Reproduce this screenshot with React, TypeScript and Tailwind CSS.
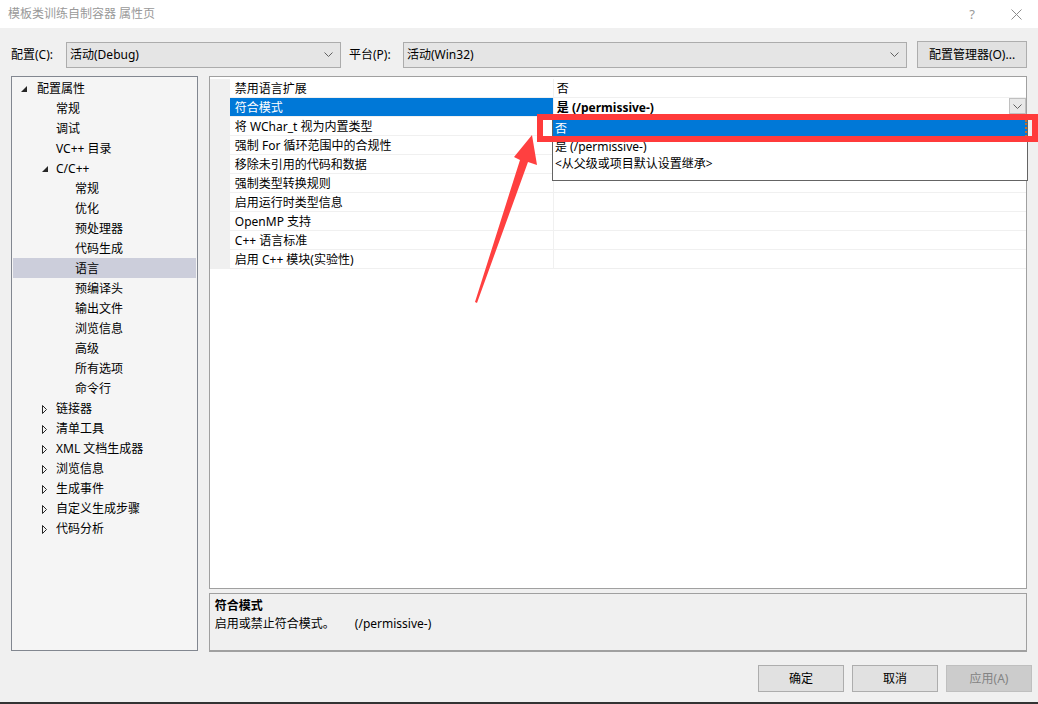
import React from 'react';

type TreeItem = { label: string; level: number; toggle?: 'open' | 'closed'; selected?: boolean };

const tree: TreeItem[] = [
  { label: '配置属性', level: 0, toggle: 'open' },
  { label: '常规', level: 1 },
  { label: '调试', level: 1 },
  { label: 'VC++ 目录', level: 1 },
  { label: 'C/C++', level: 1, toggle: 'open' },
  { label: '常规', level: 2 },
  { label: '优化', level: 2 },
  { label: '预处理器', level: 2 },
  { label: '代码生成', level: 2 },
  { label: '语言', level: 2, selected: true },
  { label: '预编译头', level: 2 },
  { label: '输出文件', level: 2 },
  { label: '浏览信息', level: 2 },
  { label: '高级', level: 2 },
  { label: '所有选项', level: 2 },
  { label: '命令行', level: 2 },
  { label: '链接器', level: 1, toggle: 'closed' },
  { label: '清单工具', level: 1, toggle: 'closed' },
  { label: 'XML 文档生成器', level: 1, toggle: 'closed' },
  { label: '浏览信息', level: 1, toggle: 'closed' },
  { label: '生成事件', level: 1, toggle: 'closed' },
  { label: '自定义生成步骤', level: 1, toggle: 'closed' },
  { label: '代码分析', level: 1, toggle: 'closed' },
];

const props: { name: string; value: string }[] = [
  { name: '禁用语言扩展', value: '否' },
  { name: '符合模式', value: '是 (/permissive-)' },
  { name: '将 WChar_t 视为内置类型', value: '' },
  { name: '强制 For 循环范围中的合规性', value: '' },
  { name: '移除未引用的代码和数据', value: '' },
  { name: '强制类型转换规则', value: '' },
  { name: '启用运行时类型信息', value: '' },
  { name: 'OpenMP 支持', value: '' },
  { name: 'C++ 语言标准', value: '' },
  { name: '启用 C++ 模块(实验性)', value: '' },
];

const Chevron = () => (
  <svg width="9" height="5" viewBox="0 0 9 5" className="shrink-0">
    <polyline points="0.5,0.5 4.5,4.5 8.5,0.5" fill="none" stroke="#606060" strokeWidth="1" />
  </svg>
);

function Combo({ value, width }: { value: string; width: string }) {
  return (
    <div className={`${width} h-[26px] flex items-center justify-between border border-[#acacac] bg-[#e5e5e5] pl-[3px] pr-[7px]`}>
      <span>{value}</span>
      <Chevron />
    </div>
  );
}

function Toggle({ kind }: { kind: 'open' | 'closed' }) {
  if (kind === 'open') {
    return (
      <svg width="6" height="6" viewBox="0 0 6 6">
        <polygon points="6,0 6,6 0,6" fill="#262626" />
      </svg>
    );
  }
  return (
    <svg width="5" height="9" viewBox="0 0 5 9">
      <polygon points="0.5,0.5 4.5,4.5 0.5,8.5" fill="none" stroke="#262626" strokeWidth="1" />
    </svg>
  );
}

function Button({ label, disabled }: { label: string; disabled?: boolean }) {
  return (
    <div
      className={`w-[86px] h-[27px] flex items-center justify-center border ${
        disabled ? 'border-[#bfbfbf] bg-[#cccccc] text-[#838383]' : 'border-[#adadad] bg-[#e1e1e1] text-black'
      }`}
    >
      {label}
    </div>
  );
}

export default function App() {
  return (
    <div
      className="relative w-[1038px] h-[704px] flex flex-col bg-[#f0f0f0] text-[12px] leading-none text-black overflow-hidden"
      style={{ fontFamily: '"Noto Sans", "Noto Sans CJK SC", sans-serif' }}
    >
      {/* title bar */}
      <div className="h-[28px] shrink-0 bg-white flex items-center justify-between pl-[8px] pr-[16px] text-[#999999]">
        <span>模板类训练自制容器 属性页</span>
        <div className="flex items-center gap-[36px]">
          <span className="text-[13px]">?</span>
          <svg width="11" height="11" viewBox="0 0 11 11">
            <path d="M0.5 0.5 L10.5 10.5 M10.5 0.5 L0.5 10.5" stroke="#8c8c8c" strokeWidth="1" />
          </svg>
        </div>
      </div>

      {/* configuration / platform row */}
      <div className="mt-[13px] h-[27px] shrink-0 flex items-center px-[11px]">
        <span className="w-[55px]">配置(C):</span>
        <Combo value="活动(Debug)" width="w-[275px]" />
        <span className="ml-[8px] w-[54px]">平台(P):</span>
        <Combo value="活动(Win32)" width="w-[504px]" />
        <div className="ml-[10px] w-[110px] h-[27px] flex items-center justify-center border border-[#adadad] bg-[#e1e1e1]">
          配置管理器(O)...
        </div>
      </div>

      {/* tree + property grid */}
      <div className="mt-[8px] h-[576px] shrink-0 flex px-[11px] gap-[11px]">
        <div className="w-[187px] h-[575px] border border-[#828790] bg-[#f5f5f5] p-[1px] pt-[1px]">
          {tree.map((t, i) => (
            <div
              key={i}
              className={`h-[20px] flex items-center pt-[2px] ${t.selected ? 'bg-[#cccedb]' : ''}`}
            >
              <div
                className={`flex items-center shrink-0 ${
                  t.level === 0 ? 'w-[24px] pl-[8px]' : t.level === 1 ? 'w-[43px] pl-[29px]' : 'w-[62px]'
                }`}
              >
                {t.toggle && <Toggle kind={t.toggle} />}
              </div>
              <span>{t.label}</span>
            </div>
          ))}
        </div>

        <div className="w-[819px] flex flex-col gap-[4px]">
          <div className="h-[513px] border border-[#a0a0a0] bg-white pt-[2px]">
            {props.map((p, i) => {
              const sel = i === 1;
              return (
                <div key={i} className="h-[19px] flex">
                  <div className="w-[20px] bg-[#f0f0f0]" />
                  <div
                    className={`w-[323px] flex items-center pl-[5px] pt-[1px] border-b border-[#f0f0f0] ${
                      sel ? 'bg-[#0078d7] text-white border-[#0078d7]' : ''
                    }`}
                  >
                    {p.name}
                  </div>
                  <div className="flex-1 flex items-center justify-between pl-[3px] pt-[1px] border-l border-b border-[#f0f0f0]">
                    <span className={sel ? 'font-bold' : ''}>{p.value}</span>
                    {sel && (
                      <div className="w-[17px] h-[16px] self-start -mt-[1px] flex items-center justify-center border border-[#c0c0c0] bg-[#e8e8e8]">
                        <Chevron />
                      </div>
                    )}
                  </div>
                </div>
              );
            })}
          </div>

          {/* description */}
          <div className="h-[59px] border border-[#a0a0a0] border-b-2 bg-[#f0f0f0] px-[5px] pt-[6px] flex flex-col gap-[6px]">
            <span className="font-bold">符合模式</span>
            <span>
              启用或禁止符合模式。<span className="ml-[20px]">(/permissive-)</span>
            </span>
          </div>
        </div>
      </div>

      {/* dialog buttons */}
      <div className="mt-[13px] h-[27px] shrink-0 flex justify-end gap-[8px] pr-[6px]">
        <Button label="确定" />
        <Button label="取消" />
        <Button label="应用(A)" disabled />
      </div>
      <div className="mt-auto h-[2px] shrink-0 bg-[#333333]" />

      {/* open value list */}
      <div className="absolute left-[552px] top-[117px] w-[476px] h-[64px] border border-[#646464] bg-white pt-[2px]">
        <div className="h-[17px] flex items-center pl-[2px] bg-[#0078d7] text-white border-r-2 border-dotted border-[#c07030]">否</div>
        <div className="h-[18px] flex items-center pl-[2px] pt-[1px]">是 (/permissive-)</div>
        <div className="h-[17px] flex items-center pl-[2px]">&lt;从父级或项目默认设置继承&gt;</div>
      </div>

      {/* red highlight */}
      <div className="absolute left-[537px] top-[114px] w-[501px] h-[28px] border-[6px] border-[#ff3b3b]" />
      <div className="absolute left-[543px] top-[120px] w-[9px] h-[16px] bg-white" />
      <svg className="absolute left-0 top-0" width="1038" height="704">
        <polygon
          points="532,135 537,165 528,162 477,303 475,302 520,160 514,157"
          fill="#ff4040"
        />
      </svg>
    </div>
  );
}
